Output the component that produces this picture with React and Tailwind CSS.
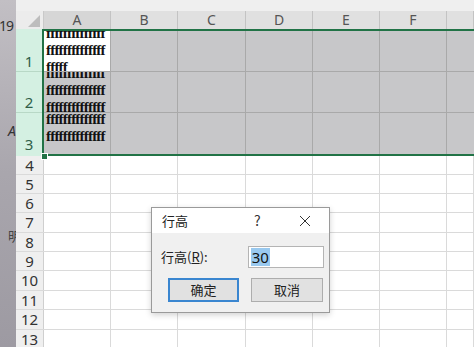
import React from "react";

const COLS = [
  { name: "A", w: "w-[67px]" },
  { name: "B", w: "w-[67px]" },
  { name: "C", w: "w-[68px]" },
  { name: "D", w: "w-[67px]" },
  { name: "E", w: "w-[67px]" },
  { name: "F", w: "w-[67px]" },
  { name: "", w: "flex-1" },
];

const LOWER_ROWS = [
  { n: 4, h: "h-[19px]" },
  { n: 5, h: "h-[19px]" },
  { n: 6, h: "h-[19px]" },
  { n: 7, h: "h-[20px]" },
  { n: 8, h: "h-[19px]" },
  { n: 9, h: "h-[19px]" },
  { n: 10, h: "h-[20px]" },
  { n: 11, h: "h-[19px]" },
  { n: 12, h: "h-[20px]" },
  { n: 13, h: "h-[19px]" },
];

const F14 = "ffffffffffffff";

// text sitting in column A of the selected rows, clipped by each row
const CELL_TEXT = [
  { top: "-mt-[6px]", lines: [F14, F14, "fffff"], white: true },
  { top: "-mt-[7px]", lines: [F14, F14, F14] },
  { top: "-mt-[2px]", lines: [F14, F14] },
];

const cellFont = { fontFamily: '"Liberation Serif", serif' };

const SelectedRow = ({ row, last }) => (
  <div className={`flex h-[41px] shrink-0 ${last ? "" : "border-b border-[#a9a9a9]"}`}>
    <div
      className={`w-[67px] shrink-0 overflow-hidden border-r border-[#a9a9a9] pl-[2px] ${
        row.white ? "bg-white" : "bg-[#c7c7c9]"
      }`}
    >
      <div
        className={`${row.top} text-[15px] font-bold leading-[17px] tracking-[-0.8px] text-[#111]`}
        style={cellFont}
      >
        {row.lines.map((l, i) => (
          <div key={i} className="whitespace-nowrap">
            {l}
          </div>
        ))}
      </div>
    </div>
    {COLS.slice(1).map((c, i) => (
      <div
        key={i}
        className={`${c.w} shrink-0 bg-[#c7c7c9] ${
          i < COLS.length - 2 ? "border-r border-[#a9a9a9]" : ""
        }`}
      />
    ))}
  </div>
);

const Dialog = () => (
  <div
    className="absolute left-[151px] top-[207px] w-[179px] h-[106px] border border-[#9a9a9a] bg-[#f0f0f0] shadow-[0_2px_6px_rgba(0,0,0,0.18)]"
    style={{ fontFamily: '"Noto Sans CJK SC", "Noto Sans", sans-serif' }}
  >
    <div className="flex h-[25px] items-center bg-white pl-[10px] text-[13px] text-[#222]">
      <span>行高</span>
      <span className="ml-[66px] text-[14px] text-[#333]">?</span>
      <svg className="ml-[38px]" width="12" height="12" viewBox="0 0 12 12">
        <path d="M1 1 L11 11 M11 1 L1 11" stroke="#333" strokeWidth="1" />
      </svg>
    </div>
    <div className="flex items-center pl-[9px] pt-[13px] text-[13px] text-[#222]">
      <span>
        行高(<span className="underline">R</span>):
      </span>
      <div className="ml-[40px] flex h-[22px] w-[76px] items-center border border-[#b4b4b4] bg-white pl-[2px]">
        <span
          className="bg-[#99c9ef] px-[1px] text-[15px] leading-[18px] text-[#111]"
          style={{ fontFamily: '"Noto Sans", sans-serif' }}
        >
          30
        </span>
      </div>
    </div>
    <div className="flex gap-[12px] pl-[16px] pt-[10px] text-[13px] text-[#222]">
      <div className="flex h-[24px] w-[71px] items-center justify-center border-2 border-[#3a86d0] bg-[#e1e1e1]">
        确定
      </div>
      <div className="flex h-[24px] w-[72px] items-center justify-center border border-[#adadad] bg-[#e1e1e1]">
        取消
      </div>
    </div>
  </div>
);

export default function App() {
  const sans = { fontFamily: '"Noto Sans", "Liberation Sans", sans-serif' };
  return (
    <div className="relative flex h-[347px] w-[474px] overflow-hidden bg-white" style={sans}>
      {/* desktop strip behind the window */}
      <div className="flex w-[16px] shrink-0 flex-col overflow-hidden bg-gradient-to-b from-[#c2bfc4] via-[#a9a6ad] to-[#9d9aa2] text-[#333]">
        <div className="mt-[17px] -ml-[1px] shrink-0 text-[14px] leading-[18px] tracking-[-1px]">19</div>
        <div className="mt-[88px] ml-[8px] shrink-0 text-[14px] italic leading-[16px]">A</div>
        <div
          className="mt-[89px] ml-[8px] shrink-0 text-[13px] leading-[16px] text-[#444]"
          style={{ fontFamily: '"Noto Sans CJK SC", sans-serif' }}
        >
          明
        </div>
      </div>

      <div className="flex flex-1 flex-col">
        <div className="h-[11px] shrink-0 bg-[#efefef]" />

        {/* column headers */}
        <div className="flex h-[18px] shrink-0 bg-[#e0e0e0] text-[14px] leading-[18px] text-[#555]">
          <div className="relative w-[28px] shrink-0 border-r border-[#c9c9c9] bg-[#ececec]">
            <div className="absolute bottom-[2px] right-[3px] h-0 w-0 border-b-[12px] border-l-[12px] border-b-[#bdbdbd] border-l-transparent" />
          </div>
          {COLS.map((c, i) => (
            <div
              key={i}
              className={`${c.w} shrink-0 border-r border-[#c3c3c3] text-center ${
                c.name === "A" ? "bg-[#d6d6d6]" : ""
              }`}
            >
              {c.name}
            </div>
          ))}
        </div>

        {/* selected rows 1-3 */}
        <div className="relative flex shrink-0">
          <div className="flex w-[28px] shrink-0 flex-col border-r-2 border-[#217346] bg-[#d4f0e2] pt-[2px] text-[15px] text-[#2f5e48]">
            {[1, 2, 3].map((n) => (
              <div
                key={n}
                className={`flex h-[41px] shrink-0 items-end justify-center pb-[1px] leading-[18px] ${
                  n < 3 ? "border-b border-[#b8d8c6]" : ""
                }`}
              >
                {n}
              </div>
            ))}
          </div>
          <div className="flex flex-1 flex-col overflow-hidden border-y-2 border-[#217346]">
            {CELL_TEXT.map((r, i) => (
              <SelectedRow key={i} row={r} last={i === 2} />
            ))}
          </div>
          <div className="absolute bottom-[-3px] left-[26px] h-[5px] w-[5px] bg-[#217346] outline outline-1 outline-white" />
        </div>

        {/* remaining rows */}
        {LOWER_ROWS.map((r) => (
          <div key={r.n} className={`flex ${r.h} shrink-0 border-b border-[#dadada]`}>
            <div className="flex w-[28px] shrink-0 items-center justify-center border-r border-[#cfcfcf] bg-[#efefef] text-[15px] text-[#333]">
              {r.n}
            </div>
            {COLS.map((c, i) => (
              <div key={i} className={`${c.w} shrink-0 border-r border-[#dadada]`} />
            ))}
          </div>
        ))}
      </div>

      <Dialog />
    </div>
  );
}
